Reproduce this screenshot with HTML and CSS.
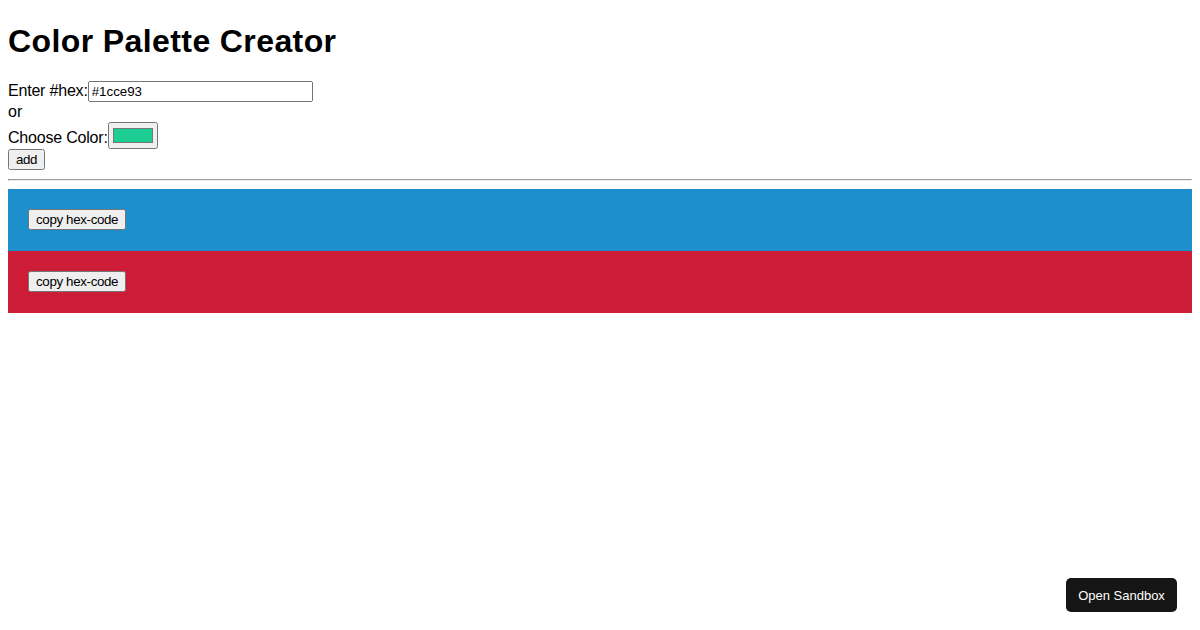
FILE: index.html
```html
<!DOCTYPE html>
<html>
<head>
<meta charset="utf-8">
<link rel="stylesheet" href="styles.css">
</head>
<body>
<h1 class="title">Color Palette Creator</h1>
<label class="lbl">Enter #hex:</label><input class="hex" type="text" value="#1cce93"><br>
or<br>
<label class="lbl">Choose Color:</label><input class="picker" type="color" value="#1cce93"><br>
<button class="btn">add</button>
<hr class="rule">
<div class="swatch swatch-blue"><button class="btn">copy hex-code</button></div>
<div class="swatch swatch-red"><button class="btn">copy hex-code</button></div>
<button class="sandbox">Open Sandbox</button>
</body>
</html>
```
FILE: styles.css
```css
body {
  margin: 8px;
  font-family: "Liberation Sans", Arial, sans-serif;
  font-size: 16px;
  line-height: 20px;
  color: #000;
  background: #fff;
}
.title {
  font-size: 32px;
  line-height: 37px;
  letter-spacing: 0.4px;
  margin: 14.5px 0 21.44px;
}
.lbl {
  letter-spacing: -0.2px;
}
.hex {
  font-family: "Liberation Sans", Arial, sans-serif;
  box-sizing: border-box;
  width: 225px;
  height: 21px;
}
.btn {
  font-family: "Liberation Sans", Arial, sans-serif;
  letter-spacing: -0.35px;
}
.rule {
  margin: 9px 0 8px;
}
.swatch {
  padding: 20px 20px 21px;
}
.swatch-blue { background: #1d8fcd; }
.swatch-red { background: #cd1d36; }
.sandbox {
  position: fixed;
  right: 23px;
  bottom: 18px;
  width: 111px;
  height: 34px;
  border: none;
  border-radius: 5px;
  background: #151515;
  color: #fff;
  font-family: "Liberation Sans", Arial, sans-serif;
  font-size: 13px;
}
```
